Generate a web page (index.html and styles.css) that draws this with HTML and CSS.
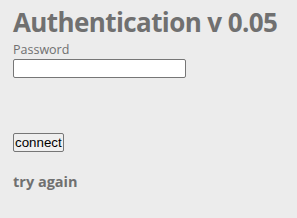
FILE: index.html
```html
<!DOCTYPE html>
<html lang="en">
<head>
    <meta charset="UTF-8">
    <meta name="viewport" content="width=device-width, initial-scale=1.0">
    <title>Authentication</title>
    <link rel="stylesheet" href="styles.css">
</head>
<body>
    <div class="auth">
        <h1 class="title">Authentication v 0.05</h1>
        <label class="label" for="password">Password</label>
        <input class="field" type="password" id="password">
        <button class="connect">connect</button>
        <div class="status">try again</div>
    </div>
</body>
</html>
```

FILE: styles.css
```css
body {
    margin: 0;
    background-color: #ececec;
    font-family: "Open Sans", sans-serif;
    color: #707070;
}
.auth {
    display: flex;
    flex-direction: column;
    align-items: flex-start;
    padding: 4px 13px 0;
}
.title {
    margin: 0;
    font-size: 26px;
    line-height: 37px;
    font-weight: 700;
    white-space: nowrap;
    letter-spacing: -0.6px;
}
.label {
    font-size: 12.5px;
    line-height: 18px;
}
.field {
    box-sizing: border-box;
    width: 173px;
    height: 19px;
    margin: 0;
    border: 1px solid #767676;
    border-radius: 2px;
    background: #fff;
}
.connect {
    box-sizing: border-box;
    margin-top: 55px;
    height: 19px;
    padding: 0 1px;
    font-family: "Liberation Sans", Arial, sans-serif;
    font-size: 13.33px;
    color: #000;
    background-color: #efefef;
    border: 1px solid #767676;
    border-radius: 2px;
}
.status {
    margin-top: 20px;
    font-size: 14.5px;
    line-height: 20px;
    font-weight: 700;
}
```
